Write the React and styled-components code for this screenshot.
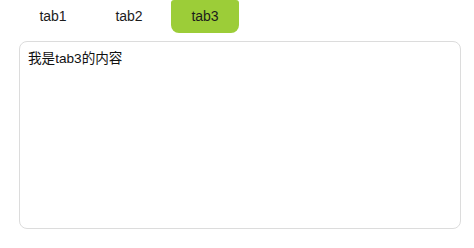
import React, { useState } from "react";
import styled, { createGlobalStyle } from "styled-components";

const Global = createGlobalStyle`
  html, body { margin: 0; padding: 0; background: #fff; }
  body { font-family: "Liberation Sans", "Noto Sans CJK SC", sans-serif; color: #222; }
`;

const Page = styled.div`
  padding-left: 19px;
  width: 442px;
`;

const TabBar = styled.div`
  display: flex;
  gap: 8px;
`;

const Tab = styled.button`
  width: 68px;
  height: 33px;
  border: none;
  padding: 0 0 2px;
  margin: 0;
  font-family: inherit;
  font-size: 14px;
  color: #1c1c1c;
  background: ${(p) => (p.$active ? "#9ccd38" : "transparent")};
  border-radius: 3px 3px 8px 8px;
  cursor: pointer;
`;

const Panel = styled.div`
  margin-top: 8px;
  height: 188px;
  box-sizing: border-box;
  border: 1px solid #dcdcdc;
  border-radius: 8px;
  padding: 8px 8px;
  font-size: 13.6px;
  line-height: 18px;
  color: #111;
`;

const tabs = ["tab1", "tab2", "tab3"];

export default function App() {
  const [active, setActive] = useState(2);
  return (
    <Page>
      <Global />
      <TabBar>
        {tabs.map((t, i) => (
          <Tab key={t} $active={i === active} onClick={() => setActive(i)}>
            {t}
          </Tab>
        ))}
      </TabBar>
      <Panel>我是{tabs[active]}的内容</Panel>
    </Page>
  );
}
